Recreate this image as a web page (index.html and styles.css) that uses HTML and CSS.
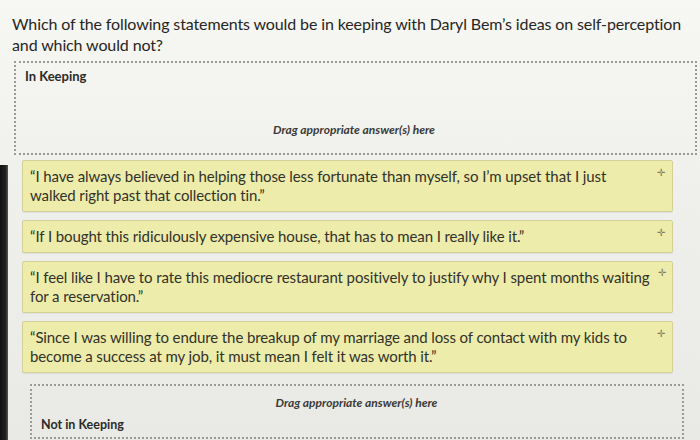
FILE: index.html
```html
<!DOCTYPE html>
<html>
<head>
<meta charset="utf-8">
<link rel="stylesheet" href="styles.css">
</head>
<body>
<div class="page">
  <div class="edge"></div>
  <p class="question">Which of the following statements would be in keeping with Daryl Bem’s ideas on self-perception and which would not?</p>
  <div class="zone zone-top">
    <div class="zone-label">In Keeping</div>
    <div class="drag-hint">Drag appropriate answer(s) here</div>
  </div>
  <div class="cards">
    <div class="card card-1">“I have always believed in helping those less fortunate than myself, so I’m upset that I just walked right past that collection tin.”<span class="move">✛</span></div>
    <div class="card card-2">“If I bought this ridiculously expensive house, that has to mean I really like it.”<span class="move">✛</span></div>
    <div class="card card-3">“I feel like I have to rate this mediocre restaurant positively to justify why I spent months waiting for a reservation.”<span class="move">✛</span></div>
    <div class="card card-4">“Since I was willing to endure the breakup of my marriage and loss of contact with my kids to become a success at my job, it must mean I felt it was worth it.”<span class="move">✛</span></div>
  </div>
  <div class="zone zone-bottom">
    <div class="drag-hint">Drag appropriate answer(s) here</div>
    <div class="zone-label">Not in Keeping</div>
  </div>
</div>
</body>
</html>
```

FILE: styles.css
```css
html, body {
  margin: 0;
  padding: 0;
}
body {
  width: 700px;
  height: 440px;
  overflow: hidden;
  font-family: Lato, "Noto Sans", sans-serif;
  color: #2f2f2c;
  background: linear-gradient(180deg, #f7f7f4 0%, #efefeb 45%, #e9e9e5 100%);
}
.page {
  position: relative;
  height: 440px;
  display: flex;
  flex-direction: column;
}
.page > * {
  flex-shrink: 0;
}
.edge {
  position: absolute;
  left: 0;
  top: 165px;
  width: 8px;
  height: 275px;
  background: linear-gradient(90deg, #111 0%, #222 70%, #5a5a58 100%);
}
.question {
  margin: 0;
  padding: 13px 4px 0 12px;
  font-size: 16px;
  letter-spacing: -0.12px;
  line-height: 21px;
  color: #262624;
}
.zone {
  box-sizing: border-box;
  border: 2px dotted #9a9a96;
  display: flex;
  flex-direction: column;
}
.zone-top {
  margin: 6px 3px 0 14px;
  height: 94px;
  padding: 5px 0 0 9px;
}
.zone-label {
  font-weight: 700;
  font-size: 13px;
  line-height: 16px;
  color: #2a2a28;
}
.drag-hint {
  font-style: italic;
  font-weight: 700;
  font-size: 12px;
  line-height: 14px;
  color: #3a3a38;
  align-self: center;
}
.zone-top .drag-hint {
  margin-top: 39px;
  margin-left: -12px;
}
.cards {
  display: flex;
  flex-direction: column;
  gap: 8px;
  margin: 5px 27px 0 22px;
}
.card {
  position: relative;
  background: #edecaa;
  border: 1px solid #d3d197;
  border-radius: 2px;
  padding: 6px 40px 6px 7px;
  font-size: 15px;
  letter-spacing: -0.1px;
  line-height: 19px;
  color: #32322a;
  box-shadow: 0 1px 1px rgba(0,0,0,0.06);
}
.card-3 { padding-right: 8px; }
.card-4 { padding-right: 20px; }
.move {
  position: absolute;
  top: 6px;
  right: 7px;
  font-size: 10px;
  line-height: 10px;
  color: #7d7b62;
}
.card-3 .move { right: 6px; top: 5px; }
.zone-bottom {
  margin: 11px 16px 0 30px;
  height: 55px;
  padding: 10px 0 0 9px;
}
.zone-bottom .drag-hint {
  margin-left: -10px;
}
.zone-bottom .zone-label {
  margin-top: 7px;
  font-size: 12.5px;
}
```
